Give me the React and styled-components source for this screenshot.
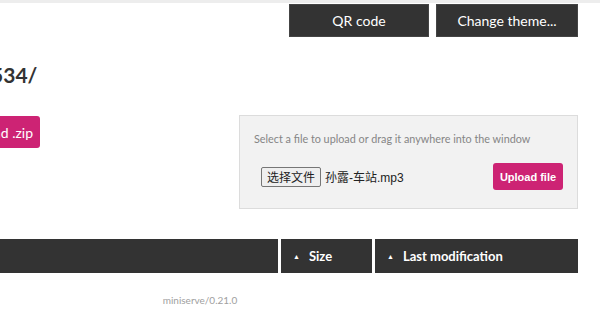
import React from 'react';
import styled, { createGlobalStyle } from 'styled-components';

const GlobalStyle = createGlobalStyle`
  html, body {
    margin: 0;
    padding: 0;
    background: #fff;
    overflow: hidden;
  }
  body {
    font-family: Lato, "Noto Sans", sans-serif;
    color: #333;
  }
`;

const TopStrip = styled.div`
  height: 3px;
  background: #ededed;
`;

const Page = styled.div`
  width: 756px;
  margin-left: -178px;
`;

const Toolbar = styled.div`
  display: flex;
  justify-content: flex-end;
  gap: 7px;
  margin-top: 1px;
`;

const ToolButton = styled.button`
  width: ${(p) => p.$width}px;
  height: 33px;
  background: #333;
  color: #fff;
  border: 1px solid #444;
  font-family: Lato, sans-serif;
  font-size: 14px;
  cursor: pointer;
`;

const Title = styled.h1`
  margin: 26px 0 0;
  padding-left: 15px;
  font-size: 21px;
  line-height: 24px;
  font-weight: 700;
  color: #333;
  white-space: nowrap;
`;

const ActionsRow = styled.div`
  display: flex;
  justify-content: space-between;
  align-items: flex-start;
  margin-top: 28px;
`;

const DownloadGroup = styled.div`
  width: 218px;
  display: flex;
  justify-content: flex-end;
  gap: 8px;
  margin-top: 1px;
`;

const DownloadButton = styled.a`
  display: inline-flex;
  align-items: center;
  flex-shrink: 0;
  height: 32px;
  padding: 0 7px;
  background: #cd2374;
  color: #fff;
  border-radius: 3px;
  font-size: 14px;
  text-decoration: none;
  white-space: nowrap;
`;

const UploadBox = styled.form`
  width: 339px;
  box-sizing: border-box;
  background: #f2f2f2;
  border: 1px solid #dcdcdc;
  padding: 16px 14px 18px;
`;

const UploadHint = styled.p`
  margin: 0;
  font-size: 10.8px;
  line-height: 14px;
  color: #858585;
  white-space: nowrap;
`;

const FileRow = styled.div`
  display: flex;
  align-items: center;
  justify-content: space-between;
  margin-top: 17px;
  padding-left: 7px;
`;

const FilePicker = styled.div`
  display: flex;
  align-items: center;
  gap: 4px;
  font-family: "Liberation Sans", "Noto Sans CJK SC", sans-serif;
  font-size: 12px;
  color: #222;
`;

const ChooseButton = styled.span`
  display: inline-flex;
  align-items: center;
  height: 20px;
  box-sizing: border-box;
  padding: 0 5px;
  background: #efefef;
  border: 1px solid #767676;
  border-radius: 2px;
`;

const UploadButton = styled.button`
  height: 27px;
  width: 70px;
  background: #cd2374;
  color: #fff;
  border: none;
  border-radius: 3px;
  font-family: "Liberation Sans", sans-serif;
  font-weight: 700;
  font-size: 11px;
`;

const TableHead = styled.div`
  display: grid;
  grid-template-columns: 1fr 91px 203px;
  column-gap: 3px;
  margin-top: 30px;
`;

const HeadCell = styled.div`
  height: 34px;
  display: flex;
  align-items: center;
  gap: 9px;
  padding-left: 12px;
  background: #333;
  color: #fff;
  font-size: 13px;
  font-weight: 700;
`;

const SortArrow = styled.span`
  font-size: 7px;
`;

const Footer = styled.footer`
  margin-top: 21px;
  text-align: center;
  font-size: 10px;
  color: #a0a0a0;
`;

export default function App() {
  return (
    <>
      <GlobalStyle />
      <TopStrip />
      <Page>
        <Toolbar>
          <ToolButton $width={140}>QR code</ToolButton>
          <ToolButton $width={142}>Change theme...</ToolButton>
        </Toolbar>
        <Title>Index of /music/534/</Title>
        <ActionsRow>
          <DownloadGroup>
            <DownloadButton href="#">Download .tar.gz</DownloadButton>
            <DownloadButton href="#">Download .zip</DownloadButton>
          </DownloadGroup>
          <UploadBox>
            <UploadHint>Select a file to upload or drag it anywhere into the window</UploadHint>
            <FileRow>
              <FilePicker>
                <ChooseButton>选择文件</ChooseButton>
                <span>孙露-车站.mp3</span>
              </FilePicker>
              <UploadButton type="button">Upload file</UploadButton>
            </FileRow>
          </UploadBox>
        </ActionsRow>
        <TableHead>
          <HeadCell>Name</HeadCell>
          <HeadCell>
            <SortArrow>▲</SortArrow>Size
          </HeadCell>
          <HeadCell>
            <SortArrow>▲</SortArrow>Last modification
          </HeadCell>
        </TableHead>
        <Footer>miniserve/0.21.0</Footer>
      </Page>
    </>
  );
}
